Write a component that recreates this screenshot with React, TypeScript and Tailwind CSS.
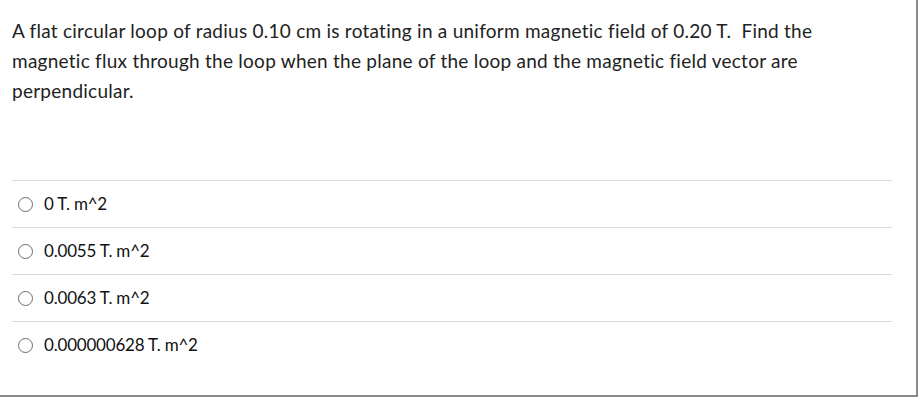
import { useState } from 'react';

const options = ['0 T. m^2', '0.0055 T. m^2', '0.0063 T. m^2', '0.000000628 T. m^2'];

export default function App() {
  const [picked, setPicked] = useState<number | null>(null);

  return (
    <div className="w-[918px] h-[397px] bg-white border-r-2 border-b-2 border-[#8a8a8a] font-['Lato','Liberation_Sans',sans-serif]">
      <div className="pl-3 pt-4 pr-6">
        <p className="text-[19px] leading-[30px] tracking-[0.25px] text-[#222]">
          A flat circular loop of radius 0.10 cm is rotating in a uniform magnetic field of 0.20 T.&nbsp; Find the
          <br />
          magnetic flux through the loop when the plane of the loop and the magnetic field vector are
          <br />
          perpendicular.
        </p>
      </div>

      <div className="ml-3 mt-[74px] w-[880px]">
        {options.map((opt, i) => (
          <label
            key={opt}
            className="flex items-center h-[47px] border-t border-[#d9d9d9] cursor-pointer"
            onClick={() => setPicked(i)}
          >
            <span className="ml-[6px] w-[15px] h-[15px] rounded-full border border-[#6b6b6b] bg-white flex items-center justify-center">
              {picked === i && <span className="w-[8px] h-[8px] rounded-full bg-[#333]" />}
            </span>
            <span className="ml-[11px] text-[17px] tracking-[-0.2px] text-[#111]">{opt}</span>
          </label>
        ))}
      </div>
    </div>
  );
}
